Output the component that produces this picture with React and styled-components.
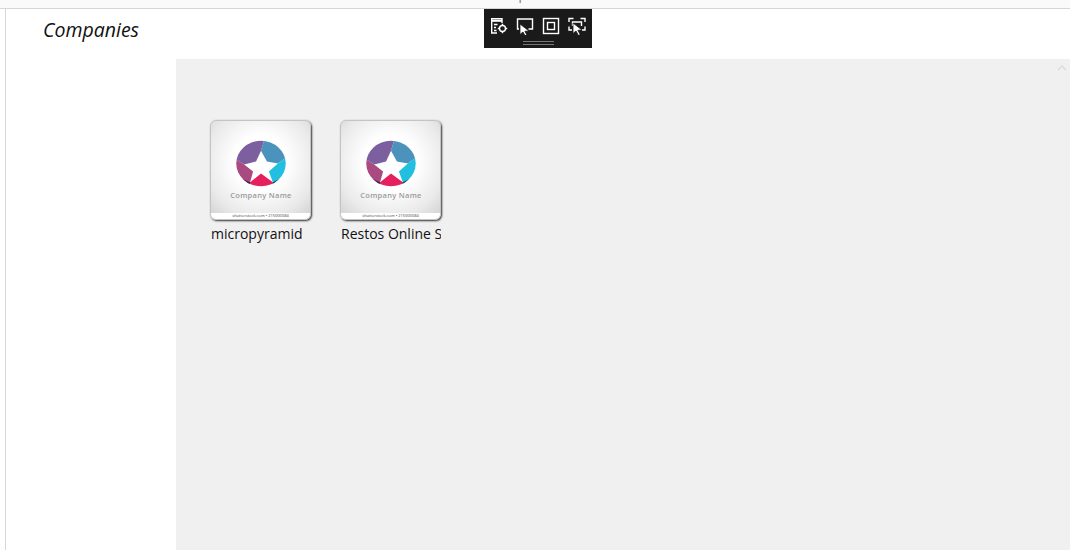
import React from "react";
import styled, { createGlobalStyle } from "styled-components";

const Global = createGlobalStyle`
  html, body {
    margin: 0;
    padding: 0;
    background: #fff;
    overflow: hidden;
  }
  * { box-sizing: border-box; }
`;

const Page = styled.div`
  position: relative;
  width: 1070px;
  height: 550px;
  overflow: hidden;
  display: flex;
  flex-direction: column;
  font-family: "Open Sans", "Liberation Sans", sans-serif;
  color: #111;
`;

const TopStrip = styled.div`
  height: 9px;
  flex: none;
  background: #fafafa;
  border-bottom: 1px solid #d6d6d6;
  overflow: hidden;
  display: flex;
  justify-content: center;
  padding-right: 25px;
`;

const TopText = styled.span`
  font-size: 13px;
  line-height: 13px;
  margin-top: -11px;
  color: #777;
`;

const Frame = styled.div`
  flex: 1;
  margin-left: 5px;
  border-left: 1px solid #d6d6d6;
  display: flex;
  flex-direction: column;
  min-height: 0;
`;

const Header = styled.header`
  height: 50px;
  flex: none;
  padding: 6px 0 0 37px;
`;

const Title = styled.h1`
  margin: 0;
  font-size: 19.5px;
  line-height: 30px;
  font-weight: 400;
  font-style: italic;
  color: #111;
`;

const Body = styled.div`
  flex: 1;
  display: flex;
  min-height: 0;
`;

const Sidebar = styled.aside`
  width: 170px;
  flex: none;
`;

const Content = styled.main`
  position: relative;
  flex: 1;
  background: #f0f0f0;
  padding: 61px 0 0 34px;
  display: flex;
  gap: 29px;
  align-items: flex-start;
`;

const ScrollUp = styled.svg`
  position: absolute;
  top: 6px;
  right: 3px;
  width: 10px;
  height: 6px;
`;

const Company = styled.div`
  width: 101px;
`;

const Thumb = styled.div`
  width: 101px;
  height: 100px;
  border-radius: 6px;
  overflow: hidden;
  border: 1px solid #c4c4c4;
  box-shadow: 1px 1px 2px rgba(40, 40, 40, 0.95);
  background: radial-gradient(circle at 50% 42%, #fff 35%, #eaeaea 72%, #cfcfcf 100%);
  display: flex;
  flex-direction: column;
`;

const ThumbArt = styled.svg`
  display: block;
  flex: 1;
  width: 99px;
`;

const Footer = styled.div`
  height: 6px;
  flex: none;
  background: #fff;
  color: #444;
  font-size: 4px;
  line-height: 6px;
  text-align: center;
  white-space: nowrap;
`;

const Name = styled.div`
  width: 100px;
  margin: 4px 0 0 1px;
  font-size: 14px;
  line-height: 20px;
  white-space: nowrap;
  overflow: hidden;
  color: #111;
`;

const Toolbar = styled.div`
  position: absolute;
  left: 484px;
  top: 9px;
  width: 108px;
  height: 39px;
  background: #1a1a1a;
  display: flex;
  flex-direction: column;
  align-items: center;
  padding-top: 8px;
`;

const ToolRow = styled.div`
  display: flex;
  gap: 8px;
`;

const ToolIcon = styled.svg`
  display: block;
  width: 18px;
  height: 18px;
  fill: none;
  stroke: #fff;
  stroke-width: 1.4;
`;

const Grip = styled.div`
  width: 31px;
  height: 4px;
  margin-top: 6px;
  border-top: 1px solid #777;
  border-bottom: 1px solid #777;
`;

const Cursor = ({ x, y }) => (
  <path
    d={`M${x} ${y}l0 10.500 3-2.500 2.400 4.500 1.800-.9-2.300-4.300 4.100-.3z`}
    fill="#fff"
    stroke="#1a1a1a"
    strokeWidth="0.8"
  />
);

const LogoArt = ({ id }) => (
  <ThumbArt viewBox="1 1 99 93">
    <defs>
      <clipPath id={id}>
        <ellipse cx="51" cy="44" rx="25" ry="23" />
      </clipPath>
    </defs>
    <g clipPath={`url(#${id})`}>
      <polygon points="51,44 51,31 56,15 15,15 15,33 34,45" fill="#7c5f9e" />
      <polygon points="51,44 51,31 56,15 85,15 85,32 68,44" fill="#4b93bd" />
      <polygon points="51,44 68,44 85,32 85,75 62,72 63,63" fill="#22bfe0" />
      <polygon points="51,44 63,63 62,72 40,72 40,63" fill="#e5205f" />
      <polygon points="51,44 40,63 40,72 15,72 15,33 34,45" fill="#a94a80" />
      <polygon points="40,63 33,60 40,67" fill="#4d2448" />
      <polygon points="63,63 69,60 62,67" fill="#26405e" />
      <polygon
        points="51,31 57,42 68,44 59,52 63,63 51,54 40,63 43,52 34,45 46,42"
        fill="#fff"
      />
    </g>
    <text
      x="51"
      y="79"
      textAnchor="middle"
      fontFamily="Open Sans, sans-serif"
      fontSize="7.6"
      fontWeight="600"
      letterSpacing="0.3"
      fill="#9b9b9b"
    >
      Company Name
    </text>
  </ThumbArt>
);

const companies = ["micropyramid", "Restos Online Solutions"];

export default function App() {
  return (
    <Page>
      <Global />
      <TopStrip>
        <TopText>p</TopText>
      </TopStrip>
      <Frame>
        <Header>
          <Title>Companies</Title>
        </Header>
        <Body>
          <Sidebar />
          <Content>
            <ScrollUp viewBox="0 0 10 6">
              <path d="M1 5l4-4 4 4" fill="none" stroke="#dcdcdc" strokeWidth="1.5" />
            </ScrollUp>
            {companies.map((name, i) => (
              <Company key={name}>
                <Thumb>
                  <LogoArt id={`disc-${i}`} />
                  <Footer>shutterstock.com • 215000084</Footer>
                </Thumb>
                <Name>{name}</Name>
              </Company>
            ))}
          </Content>
        </Body>
      </Frame>
      <Toolbar>
        <ToolRow>
          <ToolIcon viewBox="0 0 18 18">
            <path d="M12 6V1.700H1.700V16H7" />
            <path d="M1.700 3.800H12" strokeWidth="2" />
            <path d="M4 7.500h3.500M4 10.500h2M4 13.500h2.500" />
            <circle cx="12.500" cy="11.500" r="3" />
            <path d="M12.500 6.800v2M12.500 14.200v2M7.800 11.500h2M15.200 11.500h2" />
          </ToolIcon>
          <ToolIcon viewBox="0 0 18 18">
            <path d="M3 12H1.500V2h15v10h-4" />
            <Cursor x={4} y={7} />
          </ToolIcon>
          <ToolIcon viewBox="0 0 18 18">
            <rect x="1.500" y="1.500" width="15" height="15" />
            <rect x="5.500" y="5.500" width="7" height="7" />
          </ToolIcon>
          <ToolIcon viewBox="0 0 18 18">
            <path d="M1 5V1.500h4.500M12.500 1.500H17V5M1 9.500V13h3M17 9.500V13h-3" />
            <path d="M4.500 9V5h9v4" />
            <Cursor x={5} y={6} />
          </ToolIcon>
        </ToolRow>
        <Grip />
      </Toolbar>
    </Page>
  );
}
